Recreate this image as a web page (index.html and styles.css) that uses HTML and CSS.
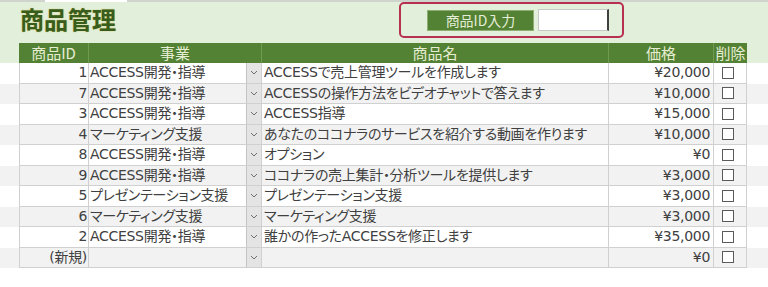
FILE: index.html
```html
<!DOCTYPE html>
<html lang="ja">
<head>
<meta charset="utf-8">
<link rel="stylesheet" href="styles.css">
</head>
<body>
<div class="topline"><span class="tab"></span></div>
<header class="band">
  <h1 class="title">商品管理</h1>
  <div class="search">
    <span class="search-btn">商品ID入力</span>
    <span class="search-input"></span>
  </div>
</header>
<div class="thead">
  <div class="grid">
    <div class="th">商品ID</div>
    <div class="th">事業</div>
    <div class="th">商品名</div>
    <div class="th">価格</div>
    <div class="th">削除</div>
  </div>
</div>
<div class="rows">
  <div class="row"><div class="grid"><div class="td id">1</div><div class="td biz"><span class="bt">ACCESS開発・指導</span><span class="dd"><svg viewBox="0 0 8 5" width="8" height="5"><path d="M1 1l3 3 3-3" fill="none" stroke="#707070" stroke-width="1"/></svg></span></div><div class="td name">ACCESSで売上管理ツールを作成します</div><div class="td price">¥20,000</div><div class="td del"><span class="cb"></span></div></div></div>
  <div class="row"><div class="grid"><div class="td id">7</div><div class="td biz"><span class="bt">ACCESS開発・指導</span><span class="dd"><svg viewBox="0 0 8 5" width="8" height="5"><path d="M1 1l3 3 3-3" fill="none" stroke="#707070" stroke-width="1"/></svg></span></div><div class="td name">ACCESSの操作方法をビデオチャットで答えます</div><div class="td price">¥10,000</div><div class="td del"><span class="cb"></span></div></div></div>
  <div class="row"><div class="grid"><div class="td id">3</div><div class="td biz"><span class="bt">ACCESS開発・指導</span><span class="dd"><svg viewBox="0 0 8 5" width="8" height="5"><path d="M1 1l3 3 3-3" fill="none" stroke="#707070" stroke-width="1"/></svg></span></div><div class="td name">ACCESS指導</div><div class="td price">¥15,000</div><div class="td del"><span class="cb"></span></div></div></div>
  <div class="row"><div class="grid"><div class="td id">4</div><div class="td biz"><span class="bt">マーケティング支援</span><span class="dd"><svg viewBox="0 0 8 5" width="8" height="5"><path d="M1 1l3 3 3-3" fill="none" stroke="#707070" stroke-width="1"/></svg></span></div><div class="td name">あなたのココナラのサービスを紹介する動画を作ります</div><div class="td price">¥10,000</div><div class="td del"><span class="cb"></span></div></div></div>
  <div class="row"><div class="grid"><div class="td id">8</div><div class="td biz"><span class="bt">ACCESS開発・指導</span><span class="dd"><svg viewBox="0 0 8 5" width="8" height="5"><path d="M1 1l3 3 3-3" fill="none" stroke="#707070" stroke-width="1"/></svg></span></div><div class="td name">オプション</div><div class="td price">¥0</div><div class="td del"><span class="cb"></span></div></div></div>
  <div class="row"><div class="grid"><div class="td id">9</div><div class="td biz"><span class="bt">ACCESS開発・指導</span><span class="dd"><svg viewBox="0 0 8 5" width="8" height="5"><path d="M1 1l3 3 3-3" fill="none" stroke="#707070" stroke-width="1"/></svg></span></div><div class="td name">ココナラの売上集計・分析ツールを提供します</div><div class="td price">¥3,000</div><div class="td del"><span class="cb"></span></div></div></div>
  <div class="row"><div class="grid"><div class="td id">5</div><div class="td biz"><span class="bt">プレゼンテーション支援</span><span class="dd"><svg viewBox="0 0 8 5" width="8" height="5"><path d="M1 1l3 3 3-3" fill="none" stroke="#707070" stroke-width="1"/></svg></span></div><div class="td name">プレゼンテーション支援</div><div class="td price">¥3,000</div><div class="td del"><span class="cb"></span></div></div></div>
  <div class="row"><div class="grid"><div class="td id">6</div><div class="td biz"><span class="bt">マーケティング支援</span><span class="dd"><svg viewBox="0 0 8 5" width="8" height="5"><path d="M1 1l3 3 3-3" fill="none" stroke="#707070" stroke-width="1"/></svg></span></div><div class="td name">マーケティング支援</div><div class="td price">¥3,000</div><div class="td del"><span class="cb"></span></div></div></div>
  <div class="row"><div class="grid"><div class="td id">2</div><div class="td biz"><span class="bt">ACCESS開発・指導</span><span class="dd"><svg viewBox="0 0 8 5" width="8" height="5"><path d="M1 1l3 3 3-3" fill="none" stroke="#707070" stroke-width="1"/></svg></span></div><div class="td name">誰かの作ったACCESSを修正します</div><div class="td price">¥35,000</div><div class="td del"><span class="cb"></span></div></div></div>
  <div class="row"><div class="grid"><div class="td id">(新規)</div><div class="td biz"><span class="bt"></span><span class="dd"><svg viewBox="0 0 8 5" width="8" height="5"><path d="M1 1l3 3 3-3" fill="none" stroke="#707070" stroke-width="1"/></svg></span></div><div class="td name"></div><div class="td price">¥0</div><div class="td del"><span class="cb"></span></div></div></div>
</div>
</body>
</html>
```
FILE: styles.css
```css
* { box-sizing: border-box; }
html, body { margin: 0; padding: 0; background: #ffffff; }
body {
  font-family: "DejaVu Sans", "Noto Sans CJK JP", sans-serif;
  font-feature-settings: "palt";
  color: #404040;
  width: 768px;
  overflow: hidden;
}
.topline { height: 2px; background: #cfd4cc; position: relative; }
.tab { position: absolute; left: 45px; top: 0; width: 82px; height: 2px; background: #ffffff; }
.band {
  height: 41px;
  background: #e2efda;
  display: flex;
  align-items: flex-start;
  padding-left: 20px;
}
.title {
  margin: 3px 0 0 0;
  font-family: "Noto Sans CJK JP", sans-serif;
  font-size: 24px;
  line-height: 28px;
  font-weight: 700;
  color: #385d1c;
  text-shadow: 0 0 1px #c9c36a, 0 0 1px #c9c36a;
  width: 379px;
}
.search {
  width: 225px;
  height: 36px;
  border: 2px solid #b8304f;
  border-radius: 5px;
  display: flex;
  align-items: center;
  padding-left: 26px;
  gap: 4px;
}
.search-btn {
  width: 107px;
  height: 21px;
  background: #548235;
  border: 1px solid #8eae72;
  color: #e4edd6;
  font-family: "Noto Sans CJK JP", sans-serif;
  font-size: 14px;
  line-height: 19px;
  text-align: center;
}
.search-input {
  width: 71px;
  height: 22px;
  background: #ffffff;
  border: 1px solid #c8c8c8;
  border-right: 2px solid #404040;
}
.thead { background: #e2efda; height: 20px; }
.grid {
  display: grid;
  grid-template-columns: 69px 173px 347px 105px 34px;
  margin-left: 19px;
  width: 728px;
  height: 100%;
}
.thead .grid { background: #548235; }
.th {
  color: #e6eed2;
  font-family: "Noto Sans CJK JP", sans-serif;
  font-size: 15px;
  line-height: 20px;
  text-align: center;
  border-left: 1px solid #6f9a50;
}
.th:first-child { border-left: none; }
.row { height: 20.5px; background: #ffffff; }
.row:nth-child(even) { background: #f2f2f2; }
.td {
  border-left: 1px solid #d0d0d0;
  border-bottom: 1px solid #d0d0d0;
  font-size: 14px;
  line-height: 19px;
  letter-spacing: -0.3px;
  white-space: nowrap;
  overflow: hidden;
}
.del { border-right: 1px solid #d0d0d0; display: flex; justify-content: center; align-items: center; }
.id { text-align: right; padding-right: 1px; }
.biz { display: flex; padding-left: 1px; }
.bt { flex: 1; overflow: hidden; }
.dd {
  width: 15px;
  flex: none;
  background: #e4e4e4;
  border-left: 1px solid #c4c4c4;
  display: flex;
  justify-content: center;
  align-items: center;
}
.name { padding-left: 2px; }
.price { text-align: right; padding-right: 3px; }
.cb {
  width: 12px;
  height: 12px;
  border: 1px solid #5a5a5a;
  background: #ffffff;
  margin-right: 5px;
}
```
